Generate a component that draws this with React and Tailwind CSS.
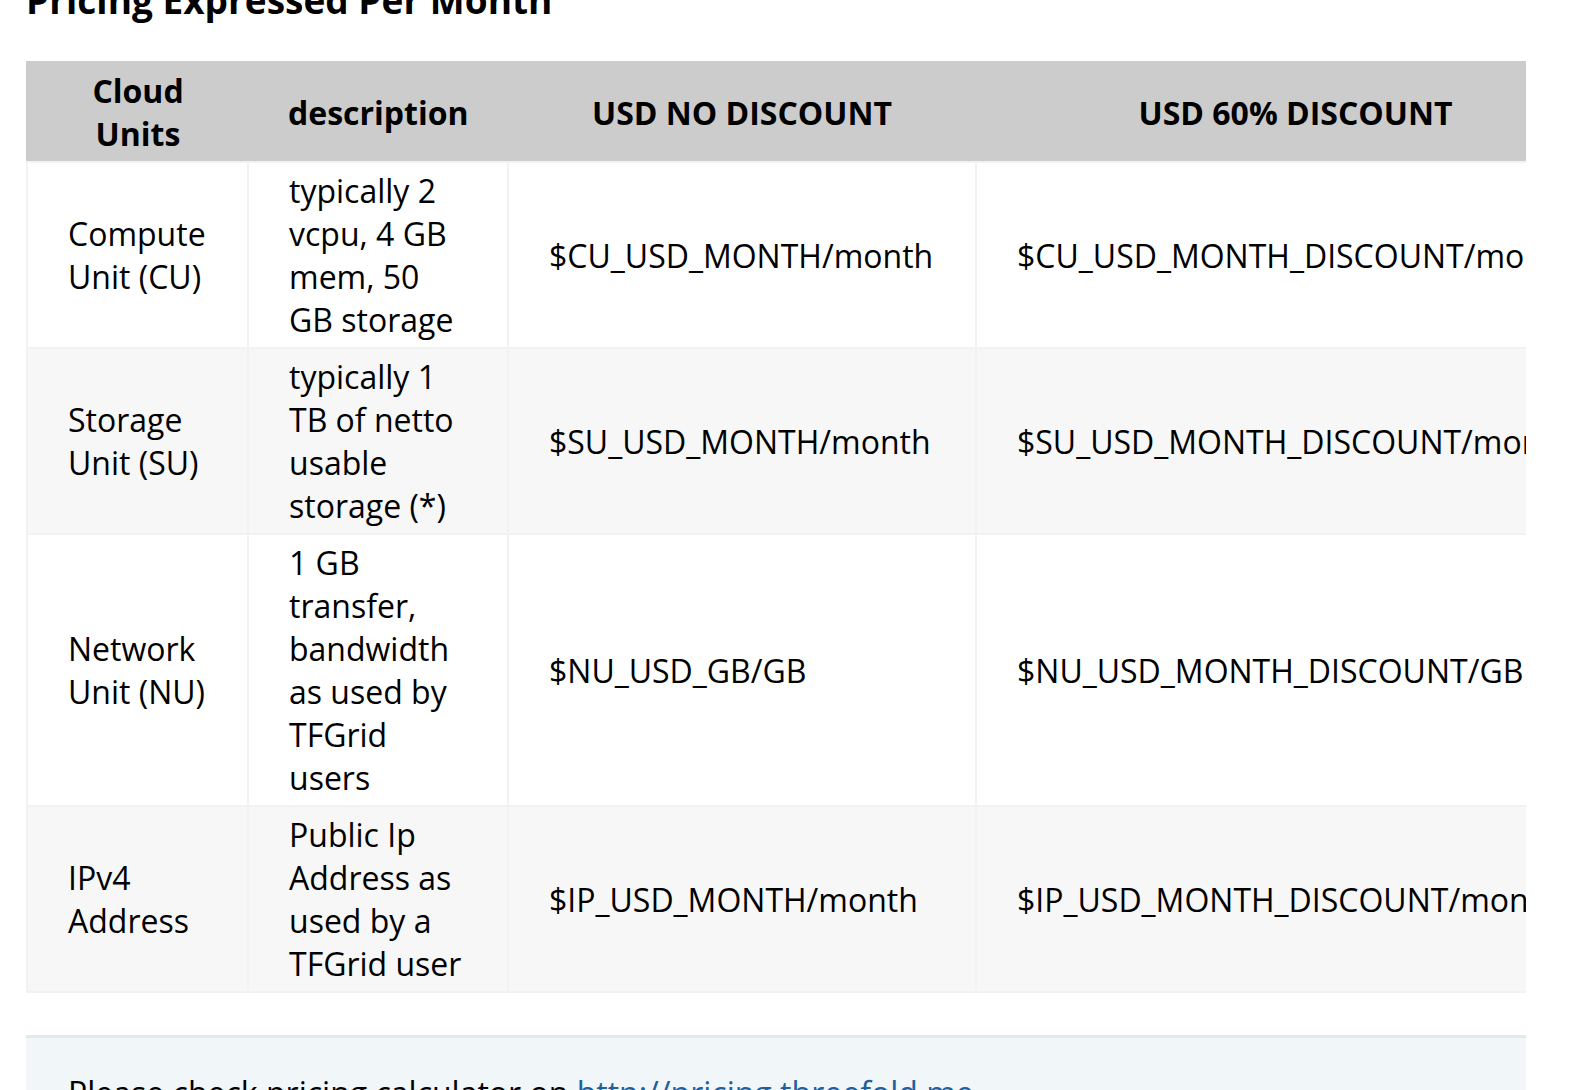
const rows = [
  {
    unit: ['Compute', 'Unit (CU)'],
    desc: 'typically 2 vcpu, 4 GB mem, 50 GB storage',
    price: '$CU_USD_MONTH/month',
    discount: '$CU_USD_MONTH_DISCOUNT/month',
  },
  {
    unit: ['Storage', 'Unit (SU)'],
    desc: 'typically 1 TB of netto usable storage (*)',
    price: '$SU_USD_MONTH/month',
    discount: '$SU_USD_MONTH_DISCOUNT/month',
  },
  {
    unit: ['Network', 'Unit (NU)'],
    desc: '1 GB transfer, bandwidth as used by TFGrid users',
    price: '$NU_USD_GB/GB',
    discount: '$NU_USD_MONTH_DISCOUNT/GB',
  },
  {
    unit: ['IPv4', 'Address'],
    desc: 'Public Ip Address as used by a TFGrid user',
    price: '$IP_USD_MONTH/month',
    discount: '$IP_USD_MONTH_DISCOUNT/month',
  },
];

const App = () => {
  return (
    <div className="min-h-screen bg-white text-black font-['Open_Sans',sans-serif] text-[32px] leading-[43px] overflow-hidden">
      <h2 className="ml-[26px] mt-[-25px] text-[37px] leading-[50px] font-bold">Pricing Expressed Per Month</h2>

      {/* tabel harga */}
      <div className="ml-[26px] mt-[36px] w-[1500px] overflow-hidden">
        <table className="table-fixed border-collapse w-[1589px]">
          <colgroup>
            <col className="w-[221px]" />
            <col className="w-[260px]" />
            <col className="w-[468px]" />
            <col className="w-[640px]" />
          </colgroup>
          <thead className="bg-[#cccccc]">
            <tr className="border-2 border-[#cccccc]">
              <th className="px-[40px] py-[6px] font-bold">Cloud Units</th>
              <th className="px-[40px] py-[6px] font-bold">description</th>
              <th className="px-[40px] py-[6px] font-bold">USD NO DISCOUNT</th>
              <th className="px-[40px] py-[6px] font-bold">USD 60% DISCOUNT</th>
            </tr>
          </thead>
          <tbody>
            {rows.map((row, i) => (
              <tr key={i} className={i % 2 === 1 ? 'bg-[#f7f7f7]' : 'bg-white'}>
                <td className="border-2 border-[#f2f2f2] px-[40px] py-[6px]">
                  {row.unit[0]}
                  <br />
                  {row.unit[1]}
                </td>
                <td className="border-2 border-[#f2f2f2] px-[40px] py-[6px]">{row.desc}</td>
                <td className="border-2 border-[#f2f2f2] px-[40px] py-[6px] whitespace-nowrap">{row.price}</td>
                <td className="border-2 border-[#f2f2f2] px-[40px] py-[6px] whitespace-nowrap">{row.discount}</td>
              </tr>
            ))}
          </tbody>
        </table>
      </div>

      {/* catatan kalkulator */}
      <div className="ml-[26px] mt-[42px] w-[1500px] border-t-[3px] border-[#e0ebef] bg-[#f1f6f8] pl-[42px] pt-[33px] pb-[40px]">
        <p>
          Please check pricing calculator on{' '}
          <a href="#" className="text-[#20609f]">http://pricing.threefold.me</a>
        </p>
      </div>
    </div>
  );
};

export default App;
